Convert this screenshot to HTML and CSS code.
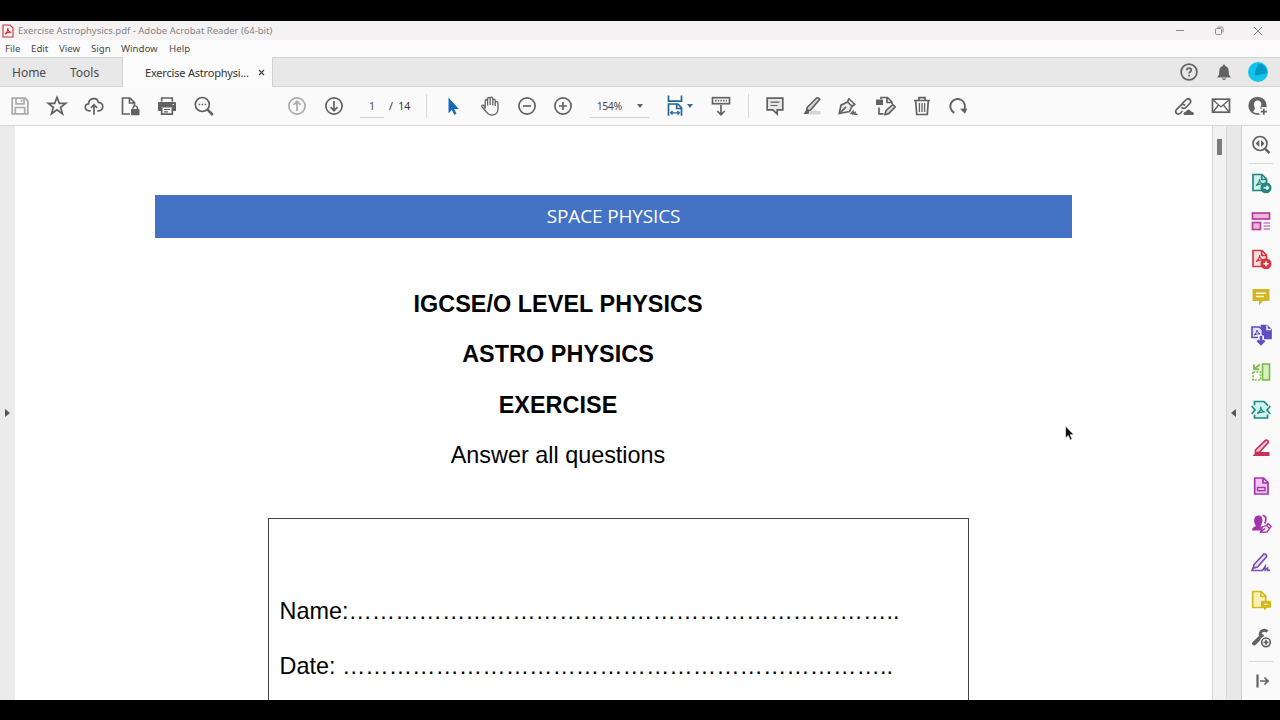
FILE: index.html
```html
<!DOCTYPE html>
<html>
<head>
<meta charset="utf-8">
<title>Exercise Astrophysics.pdf - Adobe Acrobat Reader (64-bit)</title>
<link rel="stylesheet" href="styles.css">
</head>
<body>
<div class="window">

  <div class="titlebar">
    <svg class="app-icon" width="12" height="14" viewBox="0 0 12 14">
      <path d="M1 1h7l3 3v9H1z" fill="#fff3f3" stroke="#c9303c" stroke-width="1.1"/>
      <path d="M3 10c2-1.500 3-4 2.800-6 0 2.500 1.500 4.200 3.700 4.300C7 8 5 8.600 3 10z" fill="none" stroke="#c9303c" stroke-width="1.100"/>
    </svg>
    <span class="title">Exercise Astrophysics.pdf - Adobe Acrobat Reader (64-bit)</span>
    <div class="window-buttons">
      <svg width="10" height="10" viewBox="0 0 10 10"><path d="M1 4.500h8"/></svg>
      <svg width="10" height="10" viewBox="0 0 10 10"><rect x="1.500" y="2.500" width="6" height="6" rx="1"/><path d="M3.500 1h4q1.500 0 1.500 1.500v4"/></svg>
      <svg width="10" height="10" viewBox="0 0 10 10"><path d="M1 1l8 8M9 1l-8 8"/></svg>
    </div>
  </div>

  <div class="menubar">
    <span class="menu-file">File</span>
    <span class="menu-edit">Edit</span>
    <span class="menu-view">View</span>
    <span class="menu-sign">Sign</span>
    <span class="menu-window">Window</span>
    <span>Help</span>
  </div>

  <div class="tabbar">
    <span class="nav-home">Home</span>
    <span class="nav-tools">Tools</span>
    <div class="tab">
      <span class="tab-name">Exercise Astrophysi...</span>
      <svg width="7" height="7" viewBox="0 0 7 7"><path d="M1 1l5 5M6 1l-5 5" stroke="#444" stroke-width="1.200"/></svg>
    </div>
    <div class="account">
      <svg class="icon" viewBox="0 0 24 24"><circle cx="12" cy="12" r="7.900"/><path d="M9.800 10.300c0-3 4.500-2.800 4.500-.2 0 1.600-2.200 1.700-2.200 3.500"/><path d="M12.100 14.800v1.600"/></svg>
      <svg class="icon" viewBox="0 0 24 24"><path class="solid" d="M5 17.500c2-2 2.300-3.500 2.300-6.500 0-2.700 1.300-4.400 3.500-5 0-2.100 2.400-2.100 2.400 0 2.200.6 3.500 2.300 3.500 5 0 3 .3 4.500 2.300 6.500z"/><path class="solid" d="M9.800 18.500h4.400q-2.200 3.200-4.400 0z"/></svg>
      <svg class="icon" viewBox="0 0 24 24"><circle cx="12" cy="12" r="10" fill="#10c4ec" stroke="none"/><path d="M12.500 3.500a9 9 0 0 1 8.500 9.700l-11 2.300q-2-1-1-4z" fill="#0797c4" stroke="none"/></svg>
    </div>
  </div>

  <div class="toolbar">
    <div class="group group-file">
      <svg class="icon light" viewBox="0 0 24 24"><path d="M4.200 4.200h13l2.600 2.600v13H4.200z"/><path d="M8 4.500v5.300h8V4.500M13.500 5.500v2.500M7.300 19.500v-6h9.400v6"/></svg>
      <svg class="icon" viewBox="0 0 24 24"><path d="M12 3.300l2.300 6h6.400l-5.100 4 1.900 6.500-5.500-3.900-5.500 3.900 1.900-6.500-5.100-4h6.400z"/></svg>
      <svg class="icon" viewBox="0 0 24 24"><path d="M8.700 16.800H7.300c-5 0-5.300-6.400-.8-6.900C7 3.500 15.300 3 16.300 8.300c5.800-.2 6 8.500.2 8.500h-1.200"/><path d="M12 20.800V11M8.900 13.800L12 10.700l3.100 3.100"/></svg>
      <svg class="icon" viewBox="0 0 24 24"><path d="M12 20H4.500V4H12l4.500 4.500V12M11.500 4.500v4.500h4.500"/><rect class="solid" x="13" y="15" width="8.500" height="6.300" rx=".8"/><path d="M15 15v-1.500q2.200-3.300 4.400 0V15" stroke-width="1.400"/></svg>
      <svg class="icon" viewBox="0 0 24 24"><path class="solid" d="M3 9q0-1 1-1h16q1 0 1 1v8h-3.500v-3.500h-11V17H3z"/><path d="M6.700 7.500V4h10.600v3.500M6.700 14v6.200h10.600V14" /><path d="M9 15.500h6M9 17.800h4" stroke-width="1.200"/><path d="M17.500 10.500h1.500" stroke="#fff" stroke-width="1.200"/></svg>
      <svg class="icon" viewBox="0 0 24 24"><circle cx="10.300" cy="10.500" r="7"/><path d="M15.500 15.700l5.300 5.300" stroke-width="2.500"/><path d="M6.700 10.500h7.500" stroke-width="1.600" stroke-dasharray="1.500 1.500"/></svg>
    </div>

    <div class="group group-nav">
      <svg class="icon light" viewBox="0 0 24 24"><circle cx="12" cy="12" r="8.100"/><path d="M12 17V7.500M8.500 10.800L12 7.300l3.500 3.500"/></svg>
      <svg class="icon" viewBox="0 0 24 24"><circle cx="12" cy="12" r="8.100"/><path d="M12 7v9.500M8.500 13.200l3.500 3.500 3.500-3.500"/></svg>
    </div>
    <span class="page-number">1</span>
    <span class="page-total">/&nbsp; 14</span>
    <span class="divider"></span>

    <div class="group group-view">
      <svg class="icon" viewBox="0 0 24 24"><path d="M7.500 3.500v15.700l3.400-3.200 2.300 4.800 2.300-1.100-2.300-4.600h4.600z" fill="#1769bd" stroke="none"/></svg>
      <svg class="icon thin" viewBox="0 0 24 24"><path d="M7.200 14.500V7q0-1.500 1.200-1.500T9.600 7v4.500V5q0-1.500 1.300-1.500T12.200 5v6V4.500q0-1.400 1.300-1.400t1.300 1.400V11.500 6.500q0-1.300 1.200-1.300t1.200 1.300V12 9q0-1.300 1.300-1.300T20 9v5.500c0 8-8.500 8-11.500 3.500L4 12.800c-1-1.500.8-2.300 2-1.200z"/></svg>
      <svg class="icon" viewBox="0 0 24 24"><circle cx="12" cy="12" r="8.100"/><path d="M8 12h8"/></svg>
      <svg class="icon" viewBox="0 0 24 24"><circle cx="12" cy="12" r="8.100"/><path d="M8 12h8M12 8v8"/></svg>
    </div>
    <div class="zoom-level"><span>154%</span><i class="caret"></i></div>
    <div class="fit">
      <svg class="icon blue" viewBox="0 0 24 24"><path d="M5.500 1.500v5.700h13V1.500M5.500 21.800V10h9.300l3.700 3.700v8.100"/><path d="M13.700 10.300v4.200h4.500"/><path d="M8 18.800h8M9.500 17L7.700 18.800l1.800 1.800M14.500 17l1.800 1.800-1.800 1.800" stroke-width="1.300"/></svg>
      <i class="caret"></i>
    </div>
    <svg class="icon measure" viewBox="0 0 24 24"><rect x="3.500" y="3.700" width="17" height="6"/><path d="M6 6.700h12" stroke-dasharray="1.500 1.200"/><path d="M12 11v9.500M8.300 17l3.700 3.700 3.700-3.700"/></svg>
    <span class="divider divider-tools"></span>

    <div class="group group-tools">
      <svg class="icon" viewBox="0 0 24 24"><path d="M4.200 4.200h15.600v11.600h-5.600V20l-4.400-4.200H4.200z" fill="#e8e8e8"/><path d="M7.500 8.200h9M7.500 11.500h7" stroke-width="1.200"/></svg>
      <svg class="icon" viewBox="0 0 24 24"><path d="M11 17h9.500v3.500H8z" fill="#d6d6d6" stroke="none"/><path d="M7.200 13.500L16.700 4q2-.7 3 1.400L10.500 16l-3.800.7z" fill="#ddd"/><path d="M6.500 15.500L3.500 20h5l1-3z" class="solid"/></svg>
      <svg class="icon" viewBox="0 0 24 24"><path d="M3.300 19.500l1.700-8.300 6.500-3.200 4.500 4.200-2.500 5.300z" fill="#ededed"/><path d="M3.500 19.500l6.500-6.700M11.500 8L13 4.300M16 12.200l3.300-2.200M12.500 4.500l6.500 6"/><path d="M14.500 20.300l2.500-3v2.700l2-1.500v1.700h2.500" stroke-width="1.500"/></svg>
      <svg class="icon" viewBox="0 0 24 24"><rect class="solid" x="3" y="5.500" width="7" height="5.500"/><path d="M8 5V3.500h6.500L19 8v2M14 4v4.500h4.500M6 13.500v6.300h4.500"/><path d="M12 20.500l1-3.800 6.800-6.100 2.300 2.400-6.500 6.700z" fill="#e4e4e4"/></svg>
      <svg class="icon" viewBox="0 0 24 24"><path d="M4 6.500h16M9 6V3.700h6V6M5.700 7l1 13.500h10.600l1-13.500"/><path d="M9.400 9v9M12 9v9M14.600 9v9" stroke-width="1.300"/></svg>
      <svg class="icon" viewBox="0 0 24 24"><path d="M8.300 18.800A7.300 7.300 0 1 1 18.200 15.500" stroke-width="1.900"/><path class="solid" d="M14 14.700l7.300-.3-2.300 5.400z"/></svg>
    </div>

    <div class="group group-share">
      <svg class="icon" viewBox="0 0 24 24"><path d="M9.800 10l4-4c2.800-3 6.500.5 4 3.500l-4 4c-1.500 1.500-3.500 1-4.300-.3M13 11.500c-1-1.500-3-1.500-4.300-.2l-4 4c-2.700 3 1 6.500 3.800 3.700l2-2"/><path class="solid" d="M12 21q-1.500-3 2-3.600 2.800-4 5 0 3.800.5 2.500 3.600z"/></svg>
      <svg class="icon" viewBox="0 0 24 24"><rect x="3.500" y="5.200" width="17" height="13"/><path d="M4 6l8 7 8-7M4 18l5.500-7M20 18l-5.500-7" stroke-width="1.300"/></svg>
      <svg class="icon" viewBox="0 0 24 24"><circle cx="11.500" cy="11.800" r="8.300"/><path class="solid" d="M6.500 18.500C1.500 14 3 4.500 11.500 4c8.500.5 10 9 6.500 13l-3.500-2.200q-.7-1.300.6-2.800c2-7.500-8.700-7.500-6.900 0q1.200 2 .4 3.500z"/><path d="M17.800 13v9.500M13 17.700h9.500" stroke="#fafafa" stroke-width="4.500"/><path d="M17.800 14.700v6M14.800 17.700h6"/></svg>
    </div>
  </div>

  <div class="workspace">
    <div class="rail"><i class="expand"></i></div>

    <div class="page">
      <div class="banner">SPACE PHYSICS</div>
      <div class="headings">
        <h1>IGCSE/O LEVEL PHYSICS</h1>
        <h1>ASTRO PHYSICS</h1>
        <h1>EXERCISE</h1>
        <p>Answer all questions</p>
      </div>
      <div class="details">
        <p>Name:……………………………………………………………..</p>
        <p>Date: ……………………………………………………………..</p>
      </div>
    </div>

    <div class="scrollbar"><i class="thumb"></i></div>
    <div class="rail rail-right"><i class="collapse"></i></div>

    <div class="sidebar">
      <svg class="icon" viewBox="0 0 24 24"><circle cx="11" cy="10.500" r="7"/><path d="M16 15.700l4.500 4.500" stroke-width="2.500"/><path class="solid" d="M10.200 7v7L6.500 10.500zM12 7v7l3.500-3.500z"/></svg>
      <hr>
      <!-- export pdf -->
      <svg class="icon teal" viewBox="0 0 24 24"><path d="M4 3.500h9l4.500 4.500v11.500H4z" fill="#c9f0ec"/><path d="M12.700 4v4.500H17" /><path d="M7 14.500q4-3 3.500-6.500 0 4 4 5-4-.6-7.500 1.500" stroke-width="1.100"/><circle cx="17" cy="16.800" r="4.700" class="fill"/><path d="M14.500 16.800h5M17.500 14.800l2 2-2 2" class="white"/></svg>
      <!-- edit pdf -->
      <svg class="icon pink" viewBox="0 0 24 24"><rect x="3.500" y="4" width="17" height="6" fill="#efb5df"/><rect x="3.500" y="13.500" width="8" height="7" fill="#efb5df"/><path d="M14.500 14h6.500M14.500 17h6.500M14.500 20h6.500" stroke-width="1.100"/></svg>
      <!-- create pdf -->
      <svg class="icon red" viewBox="0 0 24 24"><path d="M4 3.500h9l4.500 4.500v11.500H4z" fill="#fbdcdc"/><path d="M12.700 4v4.500H17"/><path d="M7 14.500q4-3 3.500-6.500 0 4 4 5-4-.6-7.500 1.500" stroke-width="1.100"/><circle cx="17" cy="16.800" r="4.700" class="fill"/><path d="M14.500 16.800h5M17 14.300v5" class="white"/></svg>
      <!-- comment -->
      <svg class="icon" viewBox="0 0 24 24"><path d="M3.500 4h17v12H14l-4 4.500V16H3.500z" fill="#d3b52c" stroke="none"/><path d="M7 8.300h10M7 11.500h8" stroke="#fff8c9" stroke-width="1.500"/></svg>
      <!-- combine files -->
      <svg class="icon violet" viewBox="0 0 24 24"><path d="M12.500 2.500h5.500l4 4v9h-8z" class="fill"/><path d="M3 4h7.500l3 3v7.500H3z" fill="#e6e2fb"/><path d="M5 12q3-2 3-5 .5 3 3 4-3-.5-6 1" stroke-width="1"/><path d="M18 2.500v4h4" class="white"/><path d="M12 12.500v5" stroke="#fafafa" stroke-width="6"/><path d="M12 13v7M8.500 17.300l3.500 3.500 3.500-3.500" stroke-width="2.600"/></svg>
      <!-- organize pages -->
      <svg class="icon green" viewBox="0 0 24 24"><rect x="13.500" y="4" width="7" height="16" fill="#d7efbd"/><path d="M4 12v8h7.500v-8z" stroke-dasharray="2 1.200"/><path d="M10.800 4.500L5.200 9M5 4.500V9.200h5" stroke-width="1.900"/></svg>
      <!-- compress pdf -->
      <svg class="icon teal" viewBox="0 0 24 24"><path d="M5.500 7.500v-4H15l3.500 3.500v1M5.500 16.500v3.500h13v-3.500" fill="#c9f4ef"/><path d="M5.500 8h13v8h-13z" fill="#c9f4ef" stroke="none"/><path d="M2.700 8L6 12l-3.300 4M21.300 8L18 12l3.300 4"/><path d="M8.300 15.500q4-3 3.500-7 0 4.500 4 5.500-4-.6-7.500 1.500" stroke-width="1.200"/></svg>
      <!-- redact -->
      <svg class="icon crimson" viewBox="0 0 24 24"><path d="M12 16h8.500v4H3.500l4-4z" class="fill" stroke="none"/><path d="M6.500 14l10-9.700q2.500-.5 3 2L10.500 16l-4 1z" fill="#f7cdd6"/></svg>
      <!-- prepare form -->
      <svg class="icon purple" viewBox="0 0 24 24"><path d="M5.700 4h8.800l4.500 4.500V20H5.700z" fill="#f1c8f5"/><path d="M14 4.500V9h4.500"/><rect x="8.500" y="13.500" width="7.500" height="3.200" stroke-width="1.400"/></svg>
      <!-- request signatures -->
      <svg class="icon purple" viewBox="0 0 24 24"><path d="M3 18.500q0-3.500 4-4.500c-3-4-2.500-10.500 2.500-10.500s5 6.500 2 10.500l1.500.8-1.500 3.700z" class="fill" stroke="none"/><path d="M13.500 3.500c4 0 4.300 4.500 2 8"/><path d="M11.500 20.300l2-5.300 4-1.500 3 3-2.500 3.500zM11.500 20.300l4.500-4M17.500 13.500l1.700-2 3 3-1.700 2" fill="#fbeffb" stroke-width="1.300"/></svg>
      <!-- fill and sign -->
      <svg class="icon lilac" viewBox="0 0 24 24"><path d="M5 14.500l9.700-10.300q2.800-.5 3 2.300L8.500 17l-4 1z" fill="#eadcf9"/><path d="M4.500 17L3 20.500h10.500l2.700-4v3.500l2.300-1.800v2.100h2.500"/></svg>
      <!-- send for comments -->
      <svg class="icon yellow" viewBox="0 0 24 24"><path d="M3.700 3.500h8.500l4.500 4.500v11.500h-13z" fill="#fbf0b4"/><path d="M12 4v4.500h4.500"/><path d="M12.500 13.300h9v6h-4L15.500 22v-2.700h-3z" class="fill" stroke-width="1"/><path d="M15 16.300h3.500" stroke="#fff8c9" stroke-width="1.200"/></svg>
      <!-- more tools -->
      <svg class="icon" viewBox="0 0 24 24"><path d="M5 17.500l8-7.500" stroke-width="4" stroke-linecap="round"/><path d="M18.300 5.700A4 4 0 1 0 18.500 10.500" stroke-width="3"/><circle cx="17" cy="16.300" r="6.300" fill="#fafafa" stroke="none"/><circle cx="17" cy="16.300" r="4.300" fill="#fff"/><path d="M14.500 16.300h5M17 13.800v5" stroke-width="1.800"/></svg>
      <hr class="last">
      <svg class="icon" viewBox="0 0 24 24"><path d="M8.500 5.500v13" stroke-width="2.200"/><path d="M11 12h8M15.500 8.500L19 12l-3.500 3.500"/></svg>
    </div>

    <svg class="pointer" width="12" height="17" viewBox="0 0 12 17"><path d="M1.500 1v12l2.800-2.600 1.900 4.600 1.900-.8-1.900-4.500h3.600z" fill="#111" stroke="#fff" stroke-width=".6"/></svg>
  </div>

</div>
</body>
</html>
```
FILE: styles.css
```css
* {
  box-sizing: border-box;
}

body {
  margin: 0;
  background: #000;
  font-family: "Noto Sans", "Open Sans", sans-serif;
  color: #4a4a4a;
}

.window {
  display: flex;
  flex-direction: column;
  width: 1280px;
  height: 720px;
  padding: 21px 0 20px;
  overflow: hidden;
}

/* Title and menus */
.titlebar {
  display: flex;
  align-items: center;
  height: 19px;
  padding: 0 17px 0 2px;
  background: #f5f2f3;
  font-size: 9.5px;
  color: #858585;
}

.title {
  margin-left: 4px;
  white-space: nowrap;
}

.window-buttons {
  display: flex;
  gap: 29px;
  margin-left: auto;
  fill: none;
  stroke: #888;
  stroke-width: 1;
}

.menubar {
  display: flex;
  align-items: center;
  height: 17px;
  padding-left: 5px;
  background: #fbfbfb;
  font-size: 9.7px;
}

.menu-file { width: 26px; }
.menu-edit { width: 28px; }
.menu-view { width: 32px; }
.menu-sign { width: 30px; }
.menu-window { width: 48px; }

.tabbar {
  display: flex;
  align-items: center;
  height: 30px;
  border-top: 1px solid #d2d2d2;
  border-bottom: 1px solid #d2d2d2;
  background: #e8e8e8;
  font-size: 12px;
}

.nav-home {
  width: 70px;
  padding-left: 12px;
}

.nav-tools {
  width: 52px;
}

.tab {
  display: flex;
  align-items: center;
  width: 151px;
  height: 30px;
  padding-left: 22px;
  border-left: 1px solid #d2d2d2;
  border-right: 1px solid #d2d2d2;
  background: #fbfbfb;
  font-size: 11px;
  letter-spacing: -0.2px;
  color: #333;
}

.tab-name {
  width: 113px;
  white-space: nowrap;
}

.account {
  display: flex;
  gap: 10.5px;
  margin-left: auto;
  padding-right: 10px;
}

/* Toolbar */
.toolbar {
  display: flex;
  align-items: center;
  height: 39px;
  padding: 0 4px 0 2px;
  border-bottom: 1px solid #d6d6d6;
  background: #fafafa;
  font-size: 10.5px;
}

.group {
  display: flex;
}

.group .icon {
  margin: 0 6.35px;
}

.group-nav { margin-left: 56.4px; }
.group-view { margin-left: 8px; }
.group-tools { margin-left: 8px; }
.group-share { margin-left: auto; }

.page-number {
  width: 24px;
  height: 24px;
  margin-left: 8px;
  border-bottom: 1px solid #d0d0d0;
  line-height: 24px;
  text-align: center;
}

.page-total {
  width: 42px;
  padding-left: 5px;
  color: #333;
  white-space: nowrap;
}

.divider {
  width: 1px;
  height: 24px;
  background: #d8d8d8;
}

.zoom-level {
  display: flex;
  align-items: center;
  justify-content: space-between;
  width: 59px;
  height: 24px;
  margin-left: 8px;
  padding: 0 6px 0 7px;
  border-bottom: 1px solid #d0d0d0;
  letter-spacing: -0.4px;
}

.caret {
  border: 3px solid transparent;
  border-top: 4px solid #666;
  border-bottom: 0;
}

.fit {
  display: flex;
  align-items: center;
  margin-left: 14px;
}

.fit .caret {
  border-top-color: #336d9b;
}

.measure { margin-left: 16px; }
.divider-tools { margin-left: 15px; }

/* Icons */
.icon {
  flex: none;
  width: 24px;
  height: 24px;
  color: #626262;
  fill: none;
  stroke: currentColor;
  stroke-width: 1.7;
}

.icon .solid,
.icon .fill {
  fill: currentColor;
}

.icon .solid {
  stroke: none;
}

.icon .white {
  stroke: #fff;
  stroke-width: 1.4;
}

.thin { stroke-width: 1.3; }
.light { color: #aaa; }
.blue { color: #1f6599; }
.teal { color: #23877f; }
.pink { color: #b83e9a; }
.red { color: #cf3a45; }
.violet { color: #5f4fc6; }
.green { color: #7fbd4c; }
.crimson { color: #c73159; }
.purple { color: #a236aa; }
.lilac { color: #7b51b0; }
.yellow { color: #d2b91d; }

/* Document */
.workspace {
  display: flex;
  position: relative;
  flex: 1;
  min-height: 0;
  overflow: hidden;
}

.rail {
  display: flex;
  align-items: center;
  width: 15px;
  padding-left: 5px;
  background: #ebebeb;
}

.rail-right {
  padding-left: 4px;
  border-left: 1px solid #d9d9d9;
  background: #e8e8e8;
}

.expand {
  border: 4px solid transparent;
  border-left: 5px solid #555;
  border-right: 0;
}

.collapse {
  border: 4px solid transparent;
  border-right: 5px solid #555;
  border-left: 0;
}

.page {
  width: 1197px;
  padding: 69px 140px 0;
  background: #fff;
  color: #000;
  font-family: "Liberation Sans", Arial, sans-serif;
  font-size: 23.4px;
}

.page h1,
.page p {
  margin: 0;
  font-size: inherit;
  white-space: nowrap;
}

.banner {
  height: 43px;
  background: #4472c4;
  color: #fff;
  font: 19px/43px "Open Sans", "Noto Sans", sans-serif;
  letter-spacing: -0.15px;
  text-align: center;
}

.headings {
  width: 806px;
  padding-top: 41px;
  line-height: 50.3px;
  text-align: center;
}

.headings h1 {
  letter-spacing: 0.05px;
}

.details {
  width: 701px;
  height: 240px;
  margin: 37.4px 0 0 113px;
  padding: 65px 0 0 10.5px;
  border: 1px solid #444;
  line-height: 55px;
}

.scrollbar {
  width: 14px;
  padding: 13px 0 0 4px;
  border-left: 1px solid #d9d9d9;
  background: #f1f1f1;
}

.thumb {
  display: block;
  width: 5px;
  height: 16px;
  background: #7c7c7c;
}

/* Tool list on the right */
.sidebar {
  display: flex;
  flex-direction: column;
  align-items: center;
  width: 39px;
  padding-top: 7px;
  border-left: 1px solid #cfcfcf;
  background: #fafafa;
}

.sidebar .icon {
  margin-bottom: 13.92px;
}

.sidebar hr {
  flex: none;
  width: 24px;
  height: 1px;
  margin: -8px 0 7px;
  border: 0;
  background: #d5d5d5;
}

.sidebar .last {
  margin: -3px 0 7px;
}

.pointer {
  position: absolute;
  top: 299px;
  left: 1064px;
}
```
